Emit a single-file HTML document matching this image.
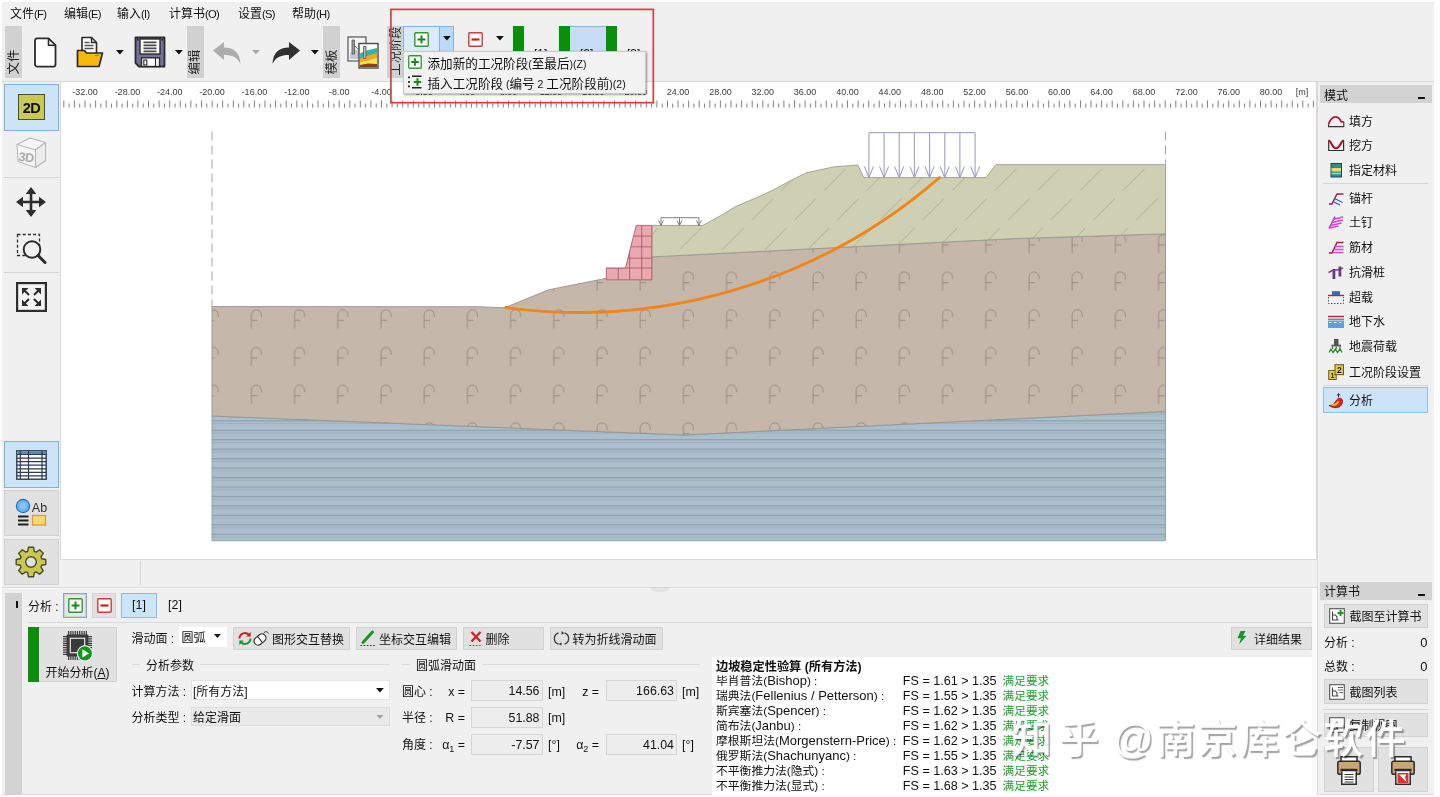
<!DOCTYPE html>
<html lang="zh-CN"><head><meta charset="utf-8"><title>GEO5</title>
<style>
*{box-sizing:border-box;margin:0;padding:0}
html,body{width:1440px;height:797px;overflow:hidden;background:#fefefe}
body{will-change:transform;position:relative;font-family:"Liberation Sans","Noto Sans CJK SC",sans-serif;font-size:12px;color:#111;line-height:1}
#win{position:absolute;left:2px;top:2px;width:1432px;height:793px;background:#f0f0f0;border-bottom:1px solid #dcdcdc}
.t{position:absolute;white-space:nowrap;line-height:18px;height:16px}
.grp{position:absolute;background:#d1d1d1;width:17px}
.grp span{position:absolute;left:50%;top:50%;white-space:nowrap;transform:translate(-50%,-50%) rotate(-90deg);font-size:12.400px;color:#222;line-height:14px}
.btn{position:absolute;background:#e1e1e1;border:1px solid #d2d2d2}
.sel{position:absolute;background:#cce4f7;border:1px solid #8db9e3}
.inp{position:absolute;background:#ededed;border:1px solid #d6d6d6;text-align:right;padding-right:2px;font-size:12.400px;line-height:20px;height:21px;white-space:nowrap}
.hl{position:absolute;height:1px;background:#dcdcdc}
.vl{position:absolute;width:1px;background:#dcdcdc}
svg{position:absolute;overflow:visible}
.ar{position:absolute;width:7.800px;height:4.500px;background:#111;clip-path:polygon(0 0,100% 0,50% 100%)}
</style></head><body>
<div id="win"></div>
<div class="t" style="left:10px;top:5px;font-size:12px">文件<span style="font-size:11.200px;letter-spacing:-.7px">(F)</span></div><div class="t" style="left:64px;top:5px;font-size:12px">编辑<span style="font-size:11.200px;letter-spacing:-.7px">(E)</span></div><div class="t" style="left:117px;top:5px;font-size:12px">输入<span style="font-size:11.200px;letter-spacing:-.7px">(I)</span></div><div class="t" style="left:169px;top:5px;font-size:12px">计算书<span style="font-size:11.200px;letter-spacing:-.7px">(O)</span></div><div class="t" style="left:238px;top:5px;font-size:12px">设置<span style="font-size:11.200px;letter-spacing:-.7px">(S)</span></div><div class="t" style="left:292px;top:5px;font-size:12px">帮助<span style="font-size:11.200px;letter-spacing:-.7px">(H)</span></div><div class="grp" style="left:5px;top:26px;height:52px"><span style="top:36px">文件</span></div><div class="grp" style="left:186.5px;top:26px;height:52px"><span style="top:36px">编辑</span></div><div class="grp" style="left:323px;top:26px;height:52px"><span style="top:36px">模板</span></div><div class="grp" style="left:386.500px;top:26px;height:52px;width:16.500px"><span style="font-size:12.200px;top:24.500px;left:9.800px">工况阶段</span></div><div class="hl" style="left:2px;top:81px;width:1432px;background:#dadada"></div><svg style="left:34px;top:36.500px" width="24" height="31" viewBox="0 0 24 32" preserveAspectRatio="none">
<path d="M3 1.5h11.5l7 7v20a2 2 0 0 1-2 2h-16.5a2 2 0 0 1-2-2v-25a2 2 0 0 1 2-2z" fill="#fff" stroke="#2b2b2b" stroke-width="1.8" stroke-linejoin="round"/>
<path d="M14.5 1.5v7h7" fill="none" stroke="#2b2b2b" stroke-width="1.6" stroke-linejoin="round"/></svg><svg style="left:76px;top:36px" width="28" height="32" viewBox="0 0 28 32">
<path d="M6 1.5h9.5l5 5v14h-14.5z" fill="#fff" stroke="#2b2b2b" stroke-width="1.6" stroke-linejoin="round"/>
<path d="M15.5 1.5v5h5" fill="none" stroke="#2b2b2b" stroke-width="1.4"/>
<path d="M8.5 6.5h5M8.5 9.5h9M8.5 12.5h9" stroke="#555" stroke-width="1.3"/>
<path d="M1.5 14.5h7l2 2.5h16l-3.5 13.5h-21.500z" fill="#f6b90c" stroke="#2b2b2b" stroke-width="1.7" stroke-linejoin="round"/>
<path d="M19 19.5h4" stroke="#b98600" stroke-width="1.2"/></svg><div class="ar" style="left:116px;top:50px"></div><svg style="left:134px;top:36px" width="32" height="32" viewBox="0 0 32 32">
<path d="M1.5 1.500h29v29h-25.500l-3.500-3.500z" fill="#74729c" stroke="#2b2b2b" stroke-width="1.8" stroke-linejoin="round"/>
<rect x="6" y="3" width="20" height="15" fill="#fff" stroke="#2b2b2b" stroke-width="1.4"/>
<path d="M9.500 6.300h13M9.500 9.300h13M9.500 12.300h13M9.500 15.300h13" stroke="#4a4a4a" stroke-width="1.800"/>
<rect x="7.500" y="21.800" width="18" height="8.700" fill="#fff" stroke="#2b2b2b" stroke-width="1.4"/><path d="M21.500 22v8.500" stroke="#2b2b2b" stroke-width="1.2"/>
<rect x="9.800" y="24" width="3" height="5" fill="#fff" stroke="#2b2b2b" stroke-width="1.1"/>
<rect x="3" y="3" width="1.6" height="1.6" fill="#222"/><rect x="27.500" y="3" width="1.6" height="1.6" fill="#222"/></svg><div class="ar" style="left:175px;top:50px"></div><svg style="left:213px;top:42px" width="28" height="23" viewBox="0 0 28 23"><path d="M0 8.500L11 0v5.500c10 0 16 5 16.500 16.500c-3-6.500-8-9-16.500-9v5z" fill="#adadad"/></svg><div class="ar" style="left:252px;top:50px;background:#a8a8a8"></div><svg style="left:272px;top:42px" width="28" height="23" viewBox="0 0 28 23"><path transform="translate(28,0) scale(-1,1)" d="M0 8.500L11 0v5.500c10 0 16 5 16.500 16.500c-3-6.500-8-9-16.500-9v5z" fill="#2f2f2f"/></svg><div class="ar" style="left:311px;top:50px"></div><svg style="left:347px;top:36px" width="32" height="33" viewBox="0 0 32 33">
<rect x="1" y="1" width="18" height="24" fill="#f4f4f4" stroke="#555" stroke-width="1.2"/>
<path d="M3 23v-6l5-3 9-2v11z" fill="#c9c3d6"/><path d="M5 4h2.500v14h-2.500z" fill="#9a9a9a" stroke="#555" stroke-width=".8"/>
<path d="M8 10l3 3 3-5" stroke="#4a8" stroke-width="1" fill="none"/>
<rect x="12" y="7.500" width="19" height="24.500" fill="#fbfbf3" stroke="#4a4a4a" stroke-width="1.4"/>
<path d="M13 30.500v-13l5-2.500 12-3v18.500z" fill="#31b3a6"/>
<path d="M13 30.500v-8l5-2 12-3.500v13.500z" fill="#f3a51b"/>
<path d="M13 30.500v-4l6-1.500 11-3v8.500z" fill="#f4e34a"/>
<path d="M13 31v-2l8-1.500 9 .5v3z" fill="#8b3a1a"/>
<path d="M16.500 10.500h2.500v12h-2.500z" fill="#b8b8b8" stroke="#555" stroke-width=".8"/></svg><div class="abs" style="position:absolute;left:403px;top:26px;width:37px;height:26px;background:#dcebfb;border:1px solid #84b1de"></div><div class="abs" style="position:absolute;left:439px;top:26px;width:15px;height:26px;background:#bcd9f5;border:1px solid #84b1de"></div><svg style="left:414px;top:31.500px" width="15" height="15" viewBox="0 0 15 15"><rect x=".8" y=".8" width="13.400" height="13.400" rx="1" fill="#fff" stroke="#2d9a2d" stroke-width="1.4"/><path d="M7.500 3.500v8M3.500 7.500h8" stroke="#178a17" stroke-width="2"/></svg><div class="ar" style="left:443px;top:36px"></div><svg style="left:468px;top:31.500px" width="15" height="15" viewBox="0 0 15 15"><rect x=".8" y=".8" width="13.400" height="13.400" rx="1" fill="#fff" stroke="#d03a3a" stroke-width="1.4"/><path d="M3.500 7.500h8" stroke="#c81e1e" stroke-width="2.200"/></svg><div class="ar" style="left:496px;top:36px"></div><div style="position:absolute;left:513px;top:26px;width:10.500px;height:52px;background:#0a8f0a"></div><div class="t" style="left:534px;top:45px">[1]</div><div style="position:absolute;left:559px;top:26px;width:11px;height:52px;background:#0a8f0a"></div><div style="position:absolute;left:570px;top:26px;width:36px;height:52px;background:#c7ddf5;border-top:1px solid #8fb2d8"></div><div style="position:absolute;left:606px;top:26px;width:11px;height:52px;background:#0a8f0a"></div><div class="t" style="left:580px;top:45px">[2]</div><div class="t" style="left:627px;top:45px">[3]</div><svg style="left:61px;top:82px;overflow:hidden" width="1255" height="477" viewBox="61 82 1255 477" font-family='"Liberation Sans",sans-serif'><rect x="61" y="82" width="1255" height="477" fill="#fff"/><defs>
<pattern id="pF" patternUnits="userSpaceOnUse" x="246.400" y="305.400" width="43.200" height="37.700">
<path d="M5 22.500v-13.700a5 5 0 0 1 10 0v2.300M5 14.500h6" fill="none" stroke="#94877c" stroke-width=".9"/></pattern>
<pattern id="pD" patternUnits="userSpaceOnUse" x="934.700" y="164.500" width="42.700" height="29.400" patternTransform="skewX(-45)">
<path d="M36.700 4.200v21.400" stroke="#adaf95" stroke-width="1.100"/></pattern>
<pattern id="pH" patternUnits="userSpaceOnUse" x="0" y="416" width="50" height="9.450">
<path d="M0 4.500h50" stroke="#7f96a6" stroke-width="1.100"/><path d="M0 7.200h50" stroke="#9db0bd" stroke-width="1"/></pattern>
</defs><path d="M63.8 100.500V107.500M69.1 103.500V107.500M74.4 100.500V107.500M79.7 103.500V107.500M85.0 100.500V107.500M90.3 103.500V107.500M95.6 100.500V107.500M100.9 103.500V107.500M106.2 100.500V107.500M111.5 103.500V107.500M116.8 100.500V107.500M122.1 103.500V107.500M127.4 100.500V107.500M132.7 103.500V107.500M137.9 100.500V107.500M143.2 103.500V107.500M148.5 100.500V107.500M153.8 103.500V107.500M159.1 100.500V107.500M164.4 103.500V107.500M169.7 100.500V107.500M175.0 103.500V107.500M180.3 100.500V107.500M185.6 103.500V107.500M190.9 100.500V107.500M196.2 103.500V107.500M201.5 100.500V107.500M206.8 103.500V107.500M212.1 100.500V107.500M217.4 103.500V107.500M222.7 100.500V107.500M228.0 103.500V107.500M233.3 100.500V107.500M238.6 103.500V107.500M243.8 100.500V107.500M249.1 103.500V107.500M254.4 100.500V107.500M259.7 103.500V107.500M265.0 100.500V107.500M270.3 103.500V107.500M275.6 100.500V107.500M280.9 103.500V107.500M286.2 100.500V107.500M291.5 103.500V107.500M296.8 100.500V107.500M302.1 103.500V107.500M307.4 100.500V107.500M312.7 103.500V107.500M318.0 100.500V107.500M323.3 103.500V107.500M328.6 100.500V107.500M333.9 103.500V107.500M339.2 100.500V107.500M344.5 103.500V107.500M349.8 100.500V107.500M355.0 103.500V107.500M360.3 100.500V107.500M365.6 103.500V107.500M370.9 100.500V107.500M376.2 103.500V107.500M381.5 100.500V107.500M386.8 103.500V107.500M392.1 100.500V107.500M397.4 103.500V107.500M402.7 100.500V107.500M408.0 103.500V107.500M413.3 100.500V107.500M418.6 103.500V107.500M423.9 100.500V107.500M429.2 103.500V107.500M434.5 100.500V107.500M439.8 103.500V107.500M445.1 100.500V107.500M450.4 103.500V107.500M455.6 100.500V107.500M460.9 103.500V107.500M466.2 100.500V107.500M471.5 103.500V107.500M476.8 100.500V107.500M482.1 103.500V107.500M487.4 100.500V107.500M492.7 103.500V107.500M498.0 100.500V107.500M503.3 103.500V107.500M508.6 100.500V107.500M513.9 103.500V107.500M519.2 100.500V107.500M524.5 103.500V107.500M529.8 100.500V107.500M535.1 103.500V107.500M540.4 100.500V107.500M545.7 103.500V107.500M551.0 100.500V107.500M556.3 103.500V107.500M561.5 100.500V107.500M566.8 103.500V107.500M572.1 100.500V107.500M577.4 103.500V107.500M582.7 100.500V107.500M588.0 103.500V107.500M593.3 100.500V107.500M598.6 103.500V107.500M603.9 100.500V107.500M609.2 103.500V107.500M614.5 100.500V107.500M619.8 103.500V107.500M625.1 100.500V107.500M630.4 103.500V107.500M635.7 100.500V107.500M641.0 103.500V107.500M646.3 100.500V107.500M651.6 103.500V107.500M656.9 100.500V107.500M662.2 103.500V107.500M667.5 100.500V107.500M672.7 103.500V107.500M678.0 100.500V107.500M683.3 103.500V107.500M688.6 100.500V107.500M693.9 103.500V107.500M699.2 100.500V107.500M704.5 103.500V107.500M709.8 100.500V107.500M715.1 103.500V107.500M720.4 100.500V107.500M725.7 103.500V107.500M731.0 100.500V107.500M736.3 103.500V107.500M741.6 100.500V107.500M746.9 103.500V107.500M752.2 100.500V107.500M757.5 103.500V107.500M762.8 100.500V107.500M768.1 103.500V107.500M773.4 100.500V107.500M778.6 103.500V107.500M783.9 100.500V107.500M789.2 103.500V107.500M794.5 100.500V107.500M799.8 103.500V107.500M805.1 100.500V107.500M810.4 103.500V107.500M815.7 100.500V107.500M821.0 103.500V107.500M826.3 100.500V107.500M831.6 103.500V107.500M836.9 100.500V107.500M842.2 103.500V107.500M847.5 100.500V107.500M852.8 103.500V107.500M858.1 100.500V107.500M863.4 103.500V107.500M868.7 100.500V107.500M874.0 103.500V107.500M879.2 100.500V107.500M884.5 103.500V107.500M889.8 100.500V107.500M895.1 103.500V107.500M900.4 100.500V107.500M905.7 103.500V107.500M911.0 100.500V107.500M916.3 103.500V107.500M921.6 100.500V107.500M926.9 103.500V107.500M932.2 100.500V107.500M937.5 103.500V107.500M942.8 100.500V107.500M948.1 103.500V107.500M953.4 100.500V107.500M958.7 103.500V107.500M964.0 100.500V107.500M969.3 103.500V107.500M974.6 100.500V107.500M979.9 103.500V107.500M985.1 100.500V107.500M990.4 103.500V107.500M995.7 100.500V107.500M1001.0 103.500V107.500M1006.3 100.500V107.500M1011.6 103.500V107.500M1016.9 100.500V107.500M1022.2 103.500V107.500M1027.5 100.500V107.500M1032.8 103.500V107.500M1038.1 100.500V107.500M1043.4 103.500V107.500M1048.7 100.500V107.500M1054.0 103.500V107.500M1059.3 100.500V107.500M1064.6 103.500V107.500M1069.9 100.500V107.500M1075.2 103.500V107.500M1080.5 100.500V107.500M1085.8 103.500V107.500M1091.0 100.500V107.500M1096.3 103.500V107.500M1101.6 100.500V107.500M1106.9 103.500V107.500M1112.2 100.500V107.500M1117.5 103.500V107.500M1122.8 100.500V107.500M1128.1 103.500V107.500M1133.4 100.500V107.500M1138.7 103.500V107.500M1144.0 100.500V107.500M1149.3 103.500V107.500M1154.6 100.500V107.500M1159.9 103.500V107.500M1165.2 100.500V107.500M1170.5 103.500V107.500M1175.8 100.500V107.500M1181.1 103.500V107.500M1186.4 100.500V107.500M1191.7 103.500V107.500M1197.0 100.500V107.500M1202.2 103.500V107.500M1207.5 100.500V107.500M1212.8 103.500V107.500M1218.1 100.500V107.500M1223.4 103.500V107.500M1228.7 100.500V107.500M1234.0 103.500V107.500M1239.3 100.500V107.500M1244.6 103.500V107.500M1249.9 100.500V107.500M1255.2 103.500V107.500M1260.5 100.500V107.500M1265.8 103.500V107.500M1271.1 100.500V107.500M1276.4 103.500V107.500M1281.7 100.500V107.500M1287.0 103.500V107.500M1292.3 100.500V107.500M1297.6 103.500V107.500M1302.8 100.500V107.500M1308.1 103.500V107.500M1313.4 100.500V107.500" stroke="#808080" stroke-width="1" fill="none"/><text x="85.0" y="95.300" font-size="9" fill="#3c3c3c" text-anchor="middle">-32.00</text><text x="127.4" y="95.300" font-size="9" fill="#3c3c3c" text-anchor="middle">-28.00</text><text x="169.7" y="95.300" font-size="9" fill="#3c3c3c" text-anchor="middle">-24.00</text><text x="212.1" y="95.300" font-size="9" fill="#3c3c3c" text-anchor="middle">-20.00</text><text x="254.4" y="95.300" font-size="9" fill="#3c3c3c" text-anchor="middle">-16.00</text><text x="296.8" y="95.300" font-size="9" fill="#3c3c3c" text-anchor="middle">-12.00</text><text x="339.2" y="95.300" font-size="9" fill="#3c3c3c" text-anchor="middle">-8.00</text><text x="381.5" y="95.300" font-size="9" fill="#3c3c3c" text-anchor="middle">-4.00</text><text x="423.9" y="95.300" font-size="9" fill="#3c3c3c" text-anchor="middle">0.00</text><text x="466.2" y="95.300" font-size="9" fill="#3c3c3c" text-anchor="middle">4.00</text><text x="508.6" y="95.300" font-size="9" fill="#3c3c3c" text-anchor="middle">8.00</text><text x="551.0" y="95.300" font-size="9" fill="#3c3c3c" text-anchor="middle">12.00</text><text x="593.3" y="95.300" font-size="9" fill="#3c3c3c" text-anchor="middle">16.00</text><text x="635.7" y="95.300" font-size="9" fill="#3c3c3c" text-anchor="middle">20.00</text><text x="678.0" y="95.300" font-size="9" fill="#3c3c3c" text-anchor="middle">24.00</text><text x="720.4" y="95.300" font-size="9" fill="#3c3c3c" text-anchor="middle">28.00</text><text x="762.8" y="95.300" font-size="9" fill="#3c3c3c" text-anchor="middle">32.00</text><text x="805.1" y="95.300" font-size="9" fill="#3c3c3c" text-anchor="middle">36.00</text><text x="847.5" y="95.300" font-size="9" fill="#3c3c3c" text-anchor="middle">40.00</text><text x="889.8" y="95.300" font-size="9" fill="#3c3c3c" text-anchor="middle">44.00</text><text x="932.2" y="95.300" font-size="9" fill="#3c3c3c" text-anchor="middle">48.00</text><text x="974.6" y="95.300" font-size="9" fill="#3c3c3c" text-anchor="middle">52.00</text><text x="1016.9" y="95.300" font-size="9" fill="#3c3c3c" text-anchor="middle">56.00</text><text x="1059.3" y="95.300" font-size="9" fill="#3c3c3c" text-anchor="middle">60.00</text><text x="1101.6" y="95.300" font-size="9" fill="#3c3c3c" text-anchor="middle">64.00</text><text x="1144.0" y="95.300" font-size="9" fill="#3c3c3c" text-anchor="middle">68.00</text><text x="1186.4" y="95.300" font-size="9" fill="#3c3c3c" text-anchor="middle">72.00</text><text x="1228.7" y="95.300" font-size="9" fill="#3c3c3c" text-anchor="middle">76.00</text><text x="1271.1" y="95.300" font-size="9" fill="#3c3c3c" text-anchor="middle">80.00</text><text x="1302" y="95.300" font-size="9" fill="#3c3c3c" text-anchor="middle">[m]</text><g transform="translate(0,.5)"><polygon points="212.0,415.5 684.0,434.5 1165.5,411.0 1165.5,540.3 212.0,540.3" fill="#abbfcb"/><polygon points="212.0,415.5 684.0,434.5 1165.5,411.0 1165.5,540.3 212.0,540.3" fill="url(#pH)" stroke="#8b9dab" stroke-width=".9"/><polygon points="212.0,306.0 480.0,306.3 504.6,307.3 548.3,289.4 606.3,277.8 651.8,279.3 651.8,256.4 1010.0,238.3 1165.5,233.3 1165.5,411.0 684.0,434.5 212.0,415.5" fill="#c5b7aa"/><polygon points="212.0,306.0 480.0,306.3 504.6,307.3 548.3,289.4 606.3,277.8 651.8,279.3 651.8,256.4 1010.0,238.3 1165.5,233.3 1165.5,411.0 684.0,434.5 212.0,415.5" fill="url(#pF)" stroke="#979390" stroke-width=".9"/><polygon points="651.8,224.9 702.8,224.9 721.8,214.5 735.6,206.1 757.0,196.9 772.2,190.1 787.5,181.7 805.8,172.5 833.3,166.4 857.8,164.5 863.8,177.1 986.0,177.1 995.8,164.2 1165.5,164.2 1165.5,233.3 1010.0,238.3 651.8,256.4" fill="#cfd0b3"/><polygon points="651.8,224.9 702.8,224.9 721.8,214.5 735.6,206.1 757.0,196.9 772.2,190.1 787.5,181.7 805.8,172.5 833.3,166.4 857.8,164.5 863.8,177.1 986.0,177.1 995.8,164.2 1165.5,164.2 1165.5,233.3 1010.0,238.3 651.8,256.4" fill="url(#pD)" stroke="#9a9b92" stroke-width=".9"/><polygon points="606.3,267.5 625.5,267.5 636.2,224.9 651.8,224.9 651.8,279.3 606.3,279.3" fill="#e8a9b0" stroke="#b05c69" stroke-width=".9"/><clipPath id="cw"><polygon points="606.3,267.5 625.5,267.5 636.2,224.9 651.8,224.9 651.8,279.3 606.3,279.3"/></clipPath><path clip-path="url(#cw)" d="M641.700 224.900V279.300M629.600 235V279.300M618.300 267.500V279.300M620 235.600H652M620 246.300H652M620 257.700H652M606 267.500H652" stroke="#b05c69" stroke-width=".9" fill="none"/><path d="M212 131V306M1165.500 131V164" stroke="#a6a6a6" stroke-width="1" stroke-dasharray="9 5" fill="none"/><path d="M868.900 132.200H975.100M868.9 132.200V177.100M864.4 166l4.500 11.100 4.500-11.100M884.1 132.200V177.100M879.6 166l4.500 11.100 4.500-11.100M899.2 132.200V177.100M894.7 166l4.500 11.100 4.500-11.100M914.4 132.200V177.100M909.9 166l4.500 11.100 4.500-11.100M929.6 132.200V177.100M925.1 166l4.500 11.100 4.500-11.100M944.8 132.200V177.100M940.2 166l4.500 11.100 4.500-11.100M959.9 132.200V177.100M955.4 166l4.500 11.100 4.500-11.100M975.1 132.200V177.100M970.6 166l4.500 11.100 4.500-11.100" stroke="#9799b9" stroke-width="1" fill="none"/><path d="M661 217.200H698.900M661.0 217.200V224.900M658.5 219.900l2.500 5 2.500-5M679.5 217.200V224.900M677.0 219.900l2.500 5 2.500-5M698.9 217.200V224.900M696.4 219.900l2.500 5 2.500-5" stroke="#74747f" stroke-width=".9" fill="none"/><path d="M505.700 307A549.400 549.400 0 0 0 939.500 177.100" stroke="#f0861a" stroke-width="2.800" fill="none" stroke-linecap="round"/></g></svg><div class="vl" style="left:60px;top:82px;height:478px;background:#d9d9d9"></div><div class="hl" style="left:60px;top:559px;width:1257px;background:#d9d9d9"></div><div class="vl" style="left:1316px;top:82px;height:478px;background:#d9d9d9"></div><div class="sel" style="left:4px;top:84px;width:55px;height:47px;border-color:#7fb0e0"></div><div style="position:absolute;left:18px;top:94px;width:27px;height:26px;background:#c9c957;border:1.500px solid #4a4a3a"></div><div class="t" style="left:18px;top:99px;width:27px;text-align:center;font-weight:bold;font-size:14.500px;letter-spacing:-.5px;color:#111">2D</div><svg style="left:16px;top:137px" width="31" height="31" viewBox="0 0 31 31">
<path d="M1 7.500L14 1l15.500 4.500v18l-10 7-17.500-6z" fill="#f6f6f6" stroke="#b9b9b9" stroke-width="1.100" stroke-linejoin="round"/>
<path d="M1 7.500l18.500 5.500 10-7.500M19.500 13v17.500" fill="none" stroke="#b9b9b9" stroke-width="1.100"/>
<path d="M19.500 13l10-7.500v18l-10 7z" fill="#ececec" stroke="#b9b9b9" stroke-width="1.100" stroke-linejoin="round"/><text x="10.300" y="24.500" font-size="12.500" font-weight="bold" font-family='"Liberation Sans",sans-serif' fill="#a9a9a9" text-anchor="middle" transform="rotate(6 10 20)" letter-spacing="-.5">3D</text></svg><div class="hl" style="left:4px;top:177px;width:55px;background:#d5d5d5"></div><svg style="left:16px;top:187px" width="30" height="30" viewBox="0 0 30 30">
<path d="M15 4v22M4 15h22" stroke="#2d2d2d" stroke-width="2.600"/>
<path d="M15 0l5.300 7h-10.600zM15 30l5.300-7h-10.600zM0 15l7-5.300v10.600zM30 15l-7-5.300v10.600z" fill="#2d2d2d"/></svg><svg style="left:16px;top:233px" width="31" height="31" viewBox="0 0 31 31">
<rect x="1.500" y="1.500" width="22" height="21" fill="none" stroke="#2d2d2d" stroke-width="1.300" stroke-dasharray="3 2.200"/>
<circle cx="16" cy="16.500" r="8.300" fill="#f0f0f0" stroke="#2d2d2d" stroke-width="2"/>
<path d="M22 22.500l7 7" stroke="#2d2d2d" stroke-width="3" stroke-linecap="round"/></svg><div class="hl" style="left:4px;top:272px;width:55px;background:#d5d5d5"></div><svg style="left:16px;top:282px" width="31" height="30" viewBox="0 0 31 30">
<rect x="1.100" y="1.100" width="28.800" height="27.800" fill="#f4f4f4" stroke="#2d2d2d" stroke-width="2.200"/>
<g fill="#2d2d2d" stroke="#2d2d2d" stroke-width="2.100">
<path d="M8.500 8.500l4.500 4.500M22.500 8.500l-4.500 4.500M8.500 21.500l4.500-4.500M22.500 21.500l-4.500-4.500"/></g>
<path d="M6 6h6.500l-6.500 6.500zM25 6h-6.500l6.500 6.500zM6 24h6.500l-6.500-6.500zM25 24h-6.500l6.500-6.500z" fill="#2d2d2d"/></svg><div class="sel" style="left:4px;top:441px;width:55px;height:47px;border-color:#7fb0e0"></div><svg style="left:16px;top:450px" width="31" height="30" viewBox="0 0 31 30"><rect x=".8" y=".8" width="29.400" height="28.400" fill="#fff" stroke="#2d3b4d" stroke-width="1.400"/><rect x="1.500" y="1.500" width="28" height="3.200" fill="#5f86b8"/><path d="M1 4.5h29M1 8.1h29M1 11.6h29M1 15.2h29M1 18.8h29M1 22.3h29M1 25.8h29M4.300 1v28M12.500 1v28M26 1v28" stroke="#2d3b4d" stroke-width="1.200" fill="none"/></svg><div class="btn" style="left:4px;top:490px;width:55px;height:46px"></div><svg style="left:15px;top:497px" width="34" height="32" viewBox="0 0 34 32">
<circle cx="8" cy="9" r="6.600" fill="#6db4f3" stroke="#2d6fb5" stroke-width="1.200"/><circle cx="8" cy="9" r="3.200" fill="#86c2f7"/>
<text x="24.500" y="14.500" font-size="12.500" font-family='"Liberation Sans",sans-serif' fill="#2d2d2d" text-anchor="middle">Ab</text>
<path d="M3 19.500h10.500M3 23.500h10.500M3 27.500h10.500" stroke="#1e1e1e" stroke-width="1.800"/>
<rect x="17.500" y="18.500" width="13" height="9.500" fill="#fbd779" stroke="#e59a2a" stroke-width="1.300"/></svg><div class="btn" style="left:4px;top:539px;width:55px;height:46px"></div><svg style="left:15px;top:546px" width="32" height="32" viewBox="0 0 32 32"><polygon points="12.69,5.30 13.46,1.22 18.54,1.22 19.31,5.30 21.23,6.09 24.66,3.75 28.25,7.34 25.91,10.77 26.70,12.69 30.78,13.46 30.78,18.54 26.70,19.31 25.91,21.23 28.25,24.66 24.66,28.25 21.23,25.91 19.31,26.70 18.54,30.78 13.46,30.78 12.69,26.70 10.77,25.91 7.34,28.25 3.75,24.66 6.09,21.23 5.30,19.31 1.22,18.54 1.22,13.46 5.30,12.69 6.09,10.77 3.75,7.34 7.34,3.75 10.77,6.09" fill="#c9c94f" stroke="#4a4a2a" stroke-width="1.400" stroke-linejoin="round"/><circle cx="16" cy="16" r="5.300" fill="#e1e1e1" stroke="#4a4a2a" stroke-width="1.400"/></svg><div class="vl" style="left:140px;top:561px;height:24px;background:#d5d5d5"></div><div class="hl" style="left:2px;top:587px;width:1316px;background:#dadada"></div><div class="hl" style="left:2px;top:588px;width:1310px;background:#f8f8f8"></div><svg style="left:649px;top:586px" width="22" height="6" viewBox="0 0 22 6"><path d="M.5 1.500h21l-5.500 3.500h-10z" fill="#e6e6e6" stroke="#d6d6d6" stroke-width=".8"/></svg><div class="vl" style="left:1317px;top:82px;height:713px;background:#dcdcdc"></div><div style="position:absolute;left:1320px;top:85px;width:112px;height:18px;background:#d2d2d2"></div><div class="t" style="left:1324px;top:86.500px">模式</div><div style="position:absolute;left:1418px;top:97px;width:7px;height:2px;background:#111"></div><div class="hl" style="left:1323px;top:183px;width:105px;background:#d6d6d6"></div><div class="hl" style="left:1323px;top:385px;width:105px;background:#d6d6d6"></div><div class="sel" style="left:1323px;top:387px;width:105px;height:26px;border-color:#92bfe8"></div><svg style="left:1327.800px;top:112.5px" width="16" height="16" viewBox="0 0 16 16"><g transform="translate(0,3)"><path d="M.6 8.300V10.600H15.800V5.900" fill="none" stroke="#333" stroke-width="1.100"/><path d="M.6 8.300C2.200 3.500 4 .9 7.500 .9C11 .9 12.300 3.800 13.400 5.900H15.800" fill="none" stroke="#b0183a" stroke-width="1.800" stroke-linejoin="round"/></g></svg><div class="t" style="left:1349px;top:112.5px">填方</div><svg style="left:1327.800px;top:137.3px" width="16" height="16" viewBox="0 0 16 16"><g transform="translate(0,2.300)"><path d="M.7 1V11.200H15.600V1" fill="none" stroke="#333" stroke-width="1.200"/><path d="M.7 1.200C3.200 1.200 4 9 8.100 9C12.200 9 13 1.200 15.600 1.200" fill="none" stroke="#a8142e" stroke-width="2"/></g></svg><div class="t" style="left:1349px;top:137.3px">挖方</div><svg style="left:1327.800px;top:162.0px" width="16" height="16" viewBox="0 0 16 16"><rect x="3" y="1.500" width="10.500" height="13.500" fill="#2f8f8a" stroke="#1b4b55" stroke-width="1"/><rect x="3.500" y="6" width="9.500" height="3.500" fill="#f4d85a"/><path d="M3.500 11.500h9.500" stroke="#7de0e0" stroke-width="1.500"/></svg><div class="t" style="left:1349px;top:162.0px">指定材料</div><svg style="left:1327.800px;top:189.5px" width="16" height="16" viewBox="0 0 16 16"><path d="M1 14h3l5-10h6.500" fill="none" stroke="#a02040" stroke-width="1.500"/><path d="M6.500 8.500l8 4M5 11.500l7 3.500" stroke="#3a5ca8" stroke-width="1.200"/></svg><div class="t" style="left:1349px;top:189.5px">锚杆</div><svg style="left:1327.800px;top:214.3px" width="16" height="16" viewBox="0 0 16 16"><path d="M1 14.500l6-12" stroke="#b030b0" stroke-width="1.400"/><path d="M5 5.500l10-2.500M4 8.500l11-2.500M2.500 11.500l11-2.500M1.500 14l9-2" stroke="#e040e0" stroke-width="1.300"/></svg><div class="t" style="left:1349px;top:214.3px">土钉</div><svg style="left:1327.800px;top:239.0px" width="16" height="16" viewBox="0 0 16 16"><path d="M1 14h3l5-10.500h6.500" fill="none" stroke="#a02040" stroke-width="1.500"/><path d="M7 7.500h8.500M5.500 10.500h10M4.500 13.500h11" stroke="#e040e0" stroke-width="1.500"/></svg><div class="t" style="left:1349px;top:239.0px">筋材</div><svg style="left:1327.800px;top:263.8px" width="16" height="16" viewBox="0 0 16 16"><path d="M.5 8.500l5-2.500h4l5.500-2" fill="none" stroke="#8a3a8a" stroke-width="1.500"/><rect x="4.500" y="5" width="2.800" height="10" fill="#6a3a8a"/><rect x="10.500" y="2.500" width="2.800" height="10" fill="#6a3a8a"/></svg><div class="t" style="left:1349px;top:263.8px">抗滑桩</div><svg style="left:1327.800px;top:288.6px" width="16" height="16" viewBox="0 0 16 16"><path d="M0 6.500h16" stroke="#c02030" stroke-width="1.400"/><path d="M4 2.500h8v3.500h-8z" fill="#3a6ab0"/><path d="M4 2l1.300 1.500 1.400-1.500 1.300 1.500 1.400-1.500 1.300 1.500 1.300-1.500" stroke="#3a6ab0" fill="none" stroke-width="1"/><path d="M.5 8v6.500h15v-6.500" fill="none" stroke="#555" stroke-width="1" stroke-dasharray="1.500 1.500"/></svg><div class="t" style="left:1349px;top:288.6px">超载</div><svg style="left:1327.800px;top:313.4px" width="16" height="16" viewBox="0 0 16 16"><path d="M0 3.500h16" stroke="#c02030" stroke-width="1.400"/><path d="M0 6.200h16" stroke="#555" stroke-width="1"/><rect x="0" y="7.500" width="16" height="7.500" fill="#5aa0e6"/><path d="M1 9.500h2.500M6 9.500h2.500M11 9.500h2.500" stroke="#e8f2ff" stroke-width="1"/></svg><div class="t" style="left:1349px;top:313.4px">地下水</div><svg style="left:1327.800px;top:338.2px" width="16" height="16" viewBox="0 0 16 16"><path d="M6 1h4.500v6h-4.500z" fill="#555"/><path d="M3.500 7.500h9.500" stroke="#555" stroke-width="1.600"/><path d="M1 14.500l2-3.500 2 3.500 2.500-3.500 2 3.500 2.500-3.500 2 3.500" fill="none" stroke="#2a8a2a" stroke-width="1.300"/><path d="M4.500 8v3M8.200 8v3M12 8v3" stroke="#2a8a2a" stroke-width="1.200"/></svg><div class="t" style="left:1349px;top:338.2px">地震荷载</div><svg style="left:1327.800px;top:363.5px" width="16" height="16" viewBox="0 0 16 16"><rect x=".7" y="6.500" width="7.500" height="9" fill="#e6c84a" stroke="#6a5a1a" stroke-width="1"/><rect x="7" y=".7" width="8.500" height="10" fill="#e6c84a" stroke="#6a5a1a" stroke-width="1"/><text x="4.500" y="14.300" font-size="7" font-weight="bold" font-family='"Liberation Sans",sans-serif' text-anchor="middle" fill="#222">1</text><text x="11.300" y="9" font-size="8.500" font-weight="bold" font-family='"Liberation Sans",sans-serif' text-anchor="middle" fill="#222">2</text></svg><div class="t" style="left:1349px;top:363.5px">工况阶段设置</div><svg style="left:1327.800px;top:392.3px" width="16" height="16" viewBox="0 0 16 16"><path d="M1 13.500c4 0 5-1.500 6.500-4c1.500-2.500 3.500-4 5.500-3c2.500 1.500 2 5-.5 7.500c-3 2.500-8 2-11.500-.5z" fill="#e02818" stroke="#801010" stroke-width=".8"/><path d="M3.500 13c3 .3 5.500-1 7-3.500" stroke="#f6c020" stroke-width="1.600" fill="none"/><path d="M10.500 5.500v-3.500M9 3.500l1.500-2 1.500 2" stroke="#333" stroke-width="1" fill="none"/></svg><div class="t" style="left:1349px;top:392.3px">分析</div><div style="position:absolute;left:1320px;top:582px;width:112px;height:17.500px;background:#d2d2d2"></div><div class="t" style="left:1324px;top:582.500px">计算书</div><div style="position:absolute;left:1418px;top:593.500px;width:7px;height:2px;background:#111"></div><div class="btn" style="left:1323.500px;top:603.500px;width:104.500px;height:24.500px"></div><svg style="left:1329px;top:608px" width="16" height="16" viewBox="0 0 16 16"><rect x=".7" y=".7" width="14.600" height="14.600" fill="#fff" stroke="#555" stroke-width="1.100"/><path d="M3.500 3.500v8.500h6M3.500 7h3l1.500 2v3" fill="none" stroke="#444" stroke-width="1.100"/><path d="M11.500 2v6M8.500 5h6" stroke="#159a15" stroke-width="2"/></svg><div class="t" style="left:1349.500px;top:608px">截图至计算书</div><div class="t" style="left:1324px;top:634px">分析 :</div><div class="t" style="left:1400px;top:634px;width:27.500px;text-align:right;font-size:13px">0</div><div class="t" style="left:1324px;top:657.500px">总数 :</div><div class="t" style="left:1400px;top:657.500px;width:27.500px;text-align:right;font-size:13px">0</div><div class="btn" style="left:1323.500px;top:679px;width:104.500px;height:24.500px"></div><svg style="left:1329px;top:683.500px" width="16" height="16" viewBox="0 0 16 16"><rect x=".7" y=".7" width="14.600" height="14.600" fill="#fff" stroke="#555" stroke-width="1.100"/><path d="M3.500 3.500v8.500h6M3.500 7h3l1.500 2v3" fill="none" stroke="#444" stroke-width="1.100"/><path d="M9 3.500h5M9 6h5M10.500 8.500h3.500" stroke="#666" stroke-width="1"/></svg><div class="t" style="left:1349.500px;top:683.500px">截图列表</div><div class="hl" style="left:1323px;top:708.500px;width:105px;background:#d6d6d6"></div><div class="btn" style="left:1323.500px;top:713px;width:104.500px;height:24px"></div><svg style="left:1329px;top:717px" width="16" height="16" viewBox="0 0 16 16"><rect x=".7" y=".7" width="14.600" height="14.600" fill="#fff" stroke="#555" stroke-width="1.100"/><path d="M3.500 3.500v8.500h6M3.500 7h3l1.500 2v3" fill="none" stroke="#444" stroke-width="1.100"/></svg><div class="t" style="left:1349.500px;top:717px">复制视图</div><div class="btn" style="left:1323.500px;top:747px;width:50px;height:45px"></div><div class="btn" style="left:1378px;top:747px;width:50px;height:45px"></div><svg style="left:1337px;top:756px" width="24" height="29" viewBox="0 0 24 29"><path d="M4 6v-5.200h16v5.200" fill="#fff" stroke="#2b2b2b" stroke-width="1.500"/><rect x=".8" y="5.200" width="22.400" height="13" rx="1.800" fill="#c9a76f" stroke="#2b2b2b" stroke-width="1.500"/><path d="M3.500 14h17" stroke="#2b2b2b" stroke-width="2.400"/><path d="M4.800 15.500v12.700h14.400v-12.700" fill="#fff" stroke="#2b2b2b" stroke-width="1.500"/><path d="M7.500 18.500h9M7.500 21h9M7.500 23.500h9M7.500 26h9" stroke="#333" stroke-width="1.200"/></svg><svg style="left:1391px;top:756px" width="24" height="29" viewBox="0 0 24 29"><path d="M4 6v-5.200h16v5.200" fill="#fff" stroke="#2b2b2b" stroke-width="1.500"/><rect x=".8" y="5.200" width="22.400" height="13" rx="1.800" fill="#c9a76f" stroke="#2b2b2b" stroke-width="1.500"/><path d="M3.500 14h17" stroke="#2b2b2b" stroke-width="2.400"/><path d="M4.800 15.500v12.700h14.400v-12.700" fill="#fff" stroke="#2b2b2b" stroke-width="1.500"/><rect x="6.500" y="17" width="11" height="10" fill="#e03030"/><path d="M8 18.500h7.500l-1.500 2.500 1.500 5-4.500-4.500z" fill="#fff"/></svg><div style="position:absolute;left:1312px;top:588px;width:5px;height:207px;background:#fafafa"></div><div style="position:absolute;left:5px;top:593px;width:17px;height:202px;background:#d2d2d2"></div><div style="position:absolute;left:16px;top:601px;width:2px;height:7px;background:#111"></div><div class="t" style="left:28px;top:598px">分析 :</div><div class="btn" style="left:63px;top:593px;width:24px;height:24.500px;border:1.500px solid #86a5cf;background:#e4e9f0;box-shadow:inset 0 0 0 1px #cfcfcf"></div><svg style="left:67.500px;top:598px" width="15" height="15" viewBox="0 0 15 15"><rect x=".8" y=".8" width="13.400" height="13.400" rx="1" fill="#fff" stroke="#2d9a2d" stroke-width="1.400"/><path d="M7.500 3.500v8M3.500 7.500h8" stroke="#178a17" stroke-width="2"/></svg><div class="btn" style="left:92px;top:593px;width:24px;height:24.500px"></div><svg style="left:96.500px;top:598px" width="15" height="15" viewBox="0 0 15 15"><rect x=".8" y=".8" width="13.400" height="13.400" rx="1" fill="#fff" stroke="#d03a3a" stroke-width="1.400"/><path d="M3.500 7.500h8" stroke="#c81e1e" stroke-width="2.200"/></svg><div class="sel" style="left:121px;top:593px;width:36px;height:24.500px"></div><div class="t" style="left:121px;top:596px;width:36px;text-align:center;font-size:12.400px">[1]</div><div class="t" style="left:163px;top:596px;width:24px;text-align:center;font-size:12.400px">[2]</div><div class="hl" style="left:28px;top:621.500px;width:1284px;background:#d9d9d9"></div><div class="btn" style="left:28px;top:627px;width:88.500px;height:55px"></div><div style="position:absolute;left:28px;top:627px;width:11px;height:55px;background:#0b8d0b"></div><svg style="left:62.500px;top:630.500px" width="30" height="30" viewBox="0 0 30 30"><path d="M5.60 0v29M0 5.60h29M7.82 0v29M0 7.82h29M10.04 0v29M0 10.04h29M12.26 0v29M0 12.26h29M14.48 0v29M0 14.48h29M16.70 0v29M0 16.70h29M18.92 0v29M0 18.92h29M21.14 0v29M0 21.14h29M23.36 0v29M0 23.36h29" stroke="#3a3a3a" stroke-width="1.250"/><rect x="3.600" y="3.600" width="21.800" height="21.800" rx="1" fill="#3a3a3a"/><rect x="7.300" y="7.300" width="14.400" height="14.400" fill="#3a3a3a" stroke="#e4e4e4" stroke-width="1.200"/><circle cx="21.900" cy="22.400" r="7.600" fill="#14961e" stroke="#f2fff2" stroke-width="1.100"/><path d="M19.400 18.300v8.200l6.600-4.100z" fill="#fff"/></svg><div class="t" style="left:39px;top:663.500px;width:77px;text-align:center">开始分析(<u>A</u>)</div><div class="t" style="left:131.500px;top:630px">滑动面 :</div><div style="position:absolute;left:179px;top:627px;width:48px;height:20px;background:#fff"></div><div class="t" style="left:181.500px;top:628.500px">圆弧</div><div class="ar" style="left:213.500px;top:633.500px"></div><div class="btn" style="left:232.5px;top:627px;width:117.5px;height:22.5px"></div><svg style="left:236.500px;top:630px" width="32" height="17" viewBox="0 0 32 17">
<path d="M2.500 8.500a5.500 5.500 0 0 1 9.800-3.300" fill="none" stroke="#d01818" stroke-width="2"/><path d="M13.700 2v4.600h-4.600z" fill="#d01818"/>
<path d="M13.500 8.500a5.500 5.500 0 0 1-9.800 3.300" fill="none" stroke="#169a2a" stroke-width="2"/><path d="M2.300 15v-4.600h4.600z" fill="#169a2a"/>
<g transform="rotate(-38 23 9.500)"><rect x="16.500" y="5.500" width="13" height="8" rx="4" fill="#fff" stroke="#2b2b2b" stroke-width="1.200"/><path d="M23 5.500v8" stroke="#2b2b2b" stroke-width="1"/></g>
<path d="M26.500 3.500c1.500-2.500 3.500-2.500 5 0" fill="none" stroke="#2b2b2b" stroke-width="1"/></svg><div class="t" style="left:272px;top:630.5px">图形交互替换</div><div class="btn" style="left:355.5px;top:627px;width:101px;height:22.5px"></div><svg style="left:360px;top:630px" width="16" height="17" viewBox="0 0 16 17">
<path d="M3 12.500l9.500-10.500" stroke="#14962a" stroke-width="3" stroke-linecap="round"/><path d="M.5 15.500h15" stroke="#333" stroke-width="1.200" stroke-dasharray="1.600 1.600"/></svg><div class="t" style="left:379px;top:630.5px">坐标交互编辑</div><div class="btn" style="left:462.5px;top:627px;width:81.5px;height:22.5px"></div><svg style="left:469px;top:630px" width="14" height="17" viewBox="0 0 14 17">
<path d="M2.500 2l9 9.500M11.500 2l-9 9.500" stroke="#d42020" stroke-width="2.300"/><path d="M.5 15.500h13" stroke="#c03030" stroke-width="1.100" stroke-dasharray="1.600 1.600"/></svg><div class="t" style="left:485.5px;top:630.5px">删除</div><div class="btn" style="left:549.5px;top:627px;width:113px;height:22.5px"></div><svg style="left:553.500px;top:631px" width="15" height="15" viewBox="0 0 15 15">
<path d="M4.500 13.200a6 6 0 0 1 0-11.400M10.500 1.800a6 6 0 0 1 0 11.400" fill="none" stroke="#3a3a3a" stroke-width="1.300" /><path d="M7.500 .3l2.800 1.800-2.800 1.600zM7.500 14.700l-2.800-1.800 2.800-1.600z" fill="#3a3a3a"/></svg><div class="t" style="left:572.5px;top:630.5px">转为折线滑动面</div><div class="btn" style="left:1231px;top:627px;width:80.500px;height:22.500px"></div><svg style="left:1237px;top:631px" width="10" height="14" viewBox="0 0 10 14"><path d="M3.500 0h5l-2.600 4.800h3.600l-7.500 8.700 2-6.300h-3.500z" fill="#14962a"/></svg><div class="t" style="left:1254px;top:630.500px">详细结果</div><div class="hl" style="left:131.500px;top:664px;width:258px;background:#dcdcdc"></div><div class="t" style="left:140px;top:657px;padding:0 6px;background:#f0f0f0">分析参数</div><div class="hl" style="left:401px;top:664px;width:299px;background:#dcdcdc"></div><div class="t" style="left:410px;top:657px;padding:0 6px;background:#f0f0f0">圆弧滑动面</div><div class="t" style="left:131.500px;top:682.500px">计算方法 :</div><div style="position:absolute;left:190.500px;top:680px;width:199px;height:20px;background:#fff;border:1px solid #e3e3e3"></div><div class="t" style="left:193px;top:682.500px">[所有方法]</div><div class="ar" style="left:376px;top:688px"></div><div class="t" style="left:131.500px;top:708.500px">分析类型 :</div><div style="position:absolute;left:190.500px;top:706.500px;width:199px;height:19.500px;background:#e9e9e9;border:1px solid #dedede"></div><div class="t" style="left:193px;top:708.500px">给定滑面</div><div class="ar" style="left:376px;top:714.500px;background:#a4a4a4"></div><div class="t" style="left:402px;top:682.5px">圆心 :</div><div class="t" style="left:425px;top:682.5px;width:40px;text-align:right;font-size:12.400px">x =</div><div class="inp" style="left:471px;top:680.0px;width:71.500px">14.56</div><div class="t" style="left:548px;top:682.5px;font-size:12.400px">[m]</div><div class="t" style="left:559px;top:682.5px;width:40px;text-align:right;font-size:12.400px">z =</div><div class="inp" style="left:605.500px;top:680.0px;width:71.500px">166.63</div><div class="t" style="left:682px;top:682.5px;font-size:12.400px">[m]</div><div class="t" style="left:402px;top:709.3px">半径 :</div><div class="t" style="left:425px;top:709.3px;width:40px;text-align:right;font-size:12.400px">R =</div><div class="inp" style="left:471px;top:706.8px;width:71.500px">51.88</div><div class="t" style="left:548px;top:709.3px;font-size:12.400px">[m]</div><div class="t" style="left:402px;top:736.3px">角度 :</div><div class="t" style="left:425px;top:736.3px;width:40px;text-align:right;font-size:12.400px">α<span style="font-size:9px;position:relative;top:2.500px">1</span> =</div><div class="inp" style="left:471px;top:733.8px;width:71.500px">-7.57</div><div class="t" style="left:548px;top:736.3px;font-size:12.400px">[°]</div><div class="t" style="left:559px;top:736.3px;width:40px;text-align:right;font-size:12.400px">α<span style="font-size:9px;position:relative;top:2.500px">2</span> =</div><div class="inp" style="left:605.500px;top:733.8px;width:71.500px">41.04</div><div class="t" style="left:682px;top:736.3px;font-size:12.400px">[°]</div><div style="position:absolute;left:712px;top:656.500px;width:600px;height:140.500px;background:#fff"></div><div class="t" style="left:716px;top:657.500px;font-weight:bold;font-size:12.200px">边坡稳定性验算 (所有方法)</div><div class="t" style="left:716px;top:672.3px;font-size:11.800px">毕肖普法(<span style="font-size:13px">Bishop</span>) :</div><div class="t" style="left:902.800px;top:672.3px;font-size:12.600px">FS = 1.61 &gt; 1.35</div><div class="t" style="left:1002.500px;top:672.3px;color:#1f9d2c;font-size:11.700px">满足要求</div><div class="t" style="left:716px;top:687.2px;font-size:11.800px">瑞典法(<span style="font-size:13px">Fellenius / Petterson</span>) :</div><div class="t" style="left:902.800px;top:687.2px;font-size:12.600px">FS = 1.55 &gt; 1.35</div><div class="t" style="left:1002.500px;top:687.2px;color:#1f9d2c;font-size:11.700px">满足要求</div><div class="t" style="left:716px;top:702.2px;font-size:11.800px">斯宾塞法(<span style="font-size:13px">Spencer</span>) :</div><div class="t" style="left:902.800px;top:702.2px;font-size:12.600px">FS = 1.62 &gt; 1.35</div><div class="t" style="left:1002.500px;top:702.2px;color:#1f9d2c;font-size:11.700px">满足要求</div><div class="t" style="left:716px;top:717.1px;font-size:11.800px">简布法(<span style="font-size:13px">Janbu</span>) :</div><div class="t" style="left:902.800px;top:717.1px;font-size:12.600px">FS = 1.62 &gt; 1.35</div><div class="t" style="left:1002.500px;top:717.1px;color:#1f9d2c;font-size:11.700px">满足要求</div><div class="t" style="left:716px;top:732.0px;font-size:11.800px">摩根斯坦法(<span style="font-size:13px">Morgenstern-Price</span>) :</div><div class="t" style="left:902.800px;top:732.0px;font-size:12.600px">FS = 1.62 &gt; 1.35</div><div class="t" style="left:1002.500px;top:732.0px;color:#1f9d2c;font-size:11.700px">满足要求</div><div class="t" style="left:716px;top:746.9px;font-size:11.800px">俄罗斯法(<span style="font-size:13px">Shachunyanc</span>) :</div><div class="t" style="left:902.800px;top:746.9px;font-size:12.600px">FS = 1.55 &gt; 1.35</div><div class="t" style="left:1002.500px;top:746.9px;color:#1f9d2c;font-size:11.700px">满足要求</div><div class="t" style="left:716px;top:761.9px;font-size:11.800px">不平衡推力法(隐式) :</div><div class="t" style="left:902.800px;top:761.9px;font-size:12.600px">FS = 1.63 &gt; 1.35</div><div class="t" style="left:1002.500px;top:761.9px;color:#1f9d2c;font-size:11.700px">满足要求</div><div class="t" style="left:716px;top:776.8px;font-size:11.800px">不平衡推力法(显式) :</div><div class="t" style="left:902.800px;top:776.8px;font-size:12.600px">FS = 1.68 &gt; 1.35</div><div class="t" style="left:1002.500px;top:776.8px;color:#1f9d2c;font-size:11.700px">满足要求</div><div style="position:absolute;left:403px;top:51px;width:242.500px;height:42.500px;background:#f2f2f2;border:1px solid #c8c8c8;box-shadow:1px 1px 2px rgba(0,0,0,.38)"></div><svg style="left:408px;top:55px" width="14" height="14" viewBox="0 0 15 15"><rect x=".8" y=".8" width="13.400" height="13.400" rx="1" fill="#fff" stroke="#2d9a2d" stroke-width="1.400"/><path d="M7.500 3.500v8M3.500 7.500h8" stroke="#178a17" stroke-width="2"/></svg><div class="t" style="left:427.500px;top:55px;font-size:12.600px">添加新的工况阶段<span style="font-size:10.500px">(</span>至最后<span style="font-size:10.500px">)(Z)</span></div><svg style="left:408px;top:75px" width="14" height="14" viewBox="0 0 14 14">
<path d="M1 1.500v1.800M1 6v1.800M1 10.500v1.800" stroke="#222" stroke-width="1.900"/>
<path d="M4 1.200h9.500M4 12.800h9.500" stroke="#222" stroke-width="1.500"/>
<path d="M9.500 3.300v7.400M5.800 7h7.400" stroke="#178a17" stroke-width="2"/></svg><div class="t" style="left:427.500px;top:74.500px;font-size:12.600px">插入工况阶段<span style="font-size:10.500px"> (</span>编号<span style="font-size:10.500px"> 2 </span>工况阶段前<span style="font-size:10.500px">)(2)</span></div><svg style="left:388px;top:6px" width="270" height="100" viewBox="388 6 270 100"><rect x="390.900" y="9.400" width="262.400" height="93.300" fill="none" stroke="#e23a3a" stroke-width="1.700"/></svg><div class="t" style="left:1012px;top:715.500px;height:46px;line-height:46px;font-size:40px;font-weight:500;letter-spacing:1px;color:#fff;text-shadow:1.600px 1.600px 1px rgba(0,0,0,.36);font-family:'Liberation Sans','Noto Sans CJK SC',sans-serif;letter-spacing:7px">知乎</div><div class="t" style="left:1113px;top:715.500px;height:46px;line-height:46px;font-size:40px;font-weight:500;letter-spacing:1px;color:#fff;text-shadow:1.600px 1.600px 1px rgba(0,0,0,.36);font-family:'Liberation Sans','Noto Sans CJK SC',sans-serif;letter-spacing:2px">@南京库仑软件</div></body></html>
